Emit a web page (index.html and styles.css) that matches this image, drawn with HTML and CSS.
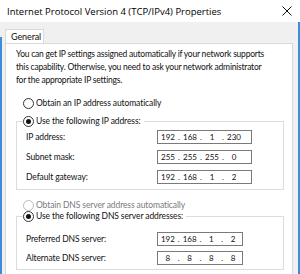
FILE: index.html
```html
<!DOCTYPE html>
<html>
<head>
<meta charset="utf-8">
<title>Internet Protocol Version 4 (TCP/IPv4) Properties</title>
<link rel="stylesheet" href="styles.css">
</head>
<body>
<div class="window">
  <div class="titlebar">
    <span class="title">Internet Protocol Version 4 (TCP/IPv4) Properties</span>
    <svg class="close" width="10" height="10" viewBox="0 0 10 10"><path d="M0.5 0.5L9.5 9.5M9.5 0.5L0.5 9.5" stroke="#111" stroke-width="1"/></svg>
  </div>
  <div class="client">
    <div class="tabs"><div class="tab">General</div></div>
    <div class="panel">
      <p class="desc">You can get IP settings assigned automatically if your network supports<br>this capability. Otherwise, you need to ask your network administrator<br>for the appropriate IP settings.</p>
      <div class="radio-row first"><span class="radio"></span>Obtain an IP address automatically</div>
      <fieldset class="group ipgroup">
        <legend class="radio-row"><span class="radio checked"></span>Use the following IP address:</legend>
        <div class="field-row"><span class="label">IP address:</span><span class="ip wide"><span class="seg">192</span><span class="dot">.</span><span class="seg">168</span><span class="dot">.</span><span class="seg">1</span><span class="dot">.</span><span class="seg">230</span></span></div>
        <div class="field-row"><span class="label">Subnet mask:</span><span class="ip wide"><span class="seg">255</span><span class="dot">.</span><span class="seg">255</span><span class="dot">.</span><span class="seg">255</span><span class="dot">.</span><span class="seg">0</span></span></div>
        <div class="field-row"><span class="label">Default gateway:</span><span class="ip wide"><span class="seg">192</span><span class="dot">.</span><span class="seg">168</span><span class="dot">.</span><span class="seg">1</span><span class="dot">.</span><span class="seg">2</span></span></div>
      </fieldset>
      <div class="radio-row disabled dns-auto"><span class="radio"></span>Obtain DNS server address automatically</div>
      <fieldset class="group dnsgroup">
        <legend class="radio-row"><span class="radio checked"></span>Use the following DNS server addresses:</legend>
        <div class="field-row"><span class="label">Preferred DNS server:</span><span class="ip narrow"><span class="seg">192</span><span class="dot">.</span><span class="seg">168</span><span class="dot">.</span><span class="seg">1</span><span class="dot">.</span><span class="seg">2</span></span></div>
        <div class="field-row"><span class="label">Alternate DNS server:</span><span class="ip narrow"><span class="seg">8</span><span class="dot">.</span><span class="seg">8</span><span class="dot">.</span><span class="seg">8</span><span class="dot">.</span><span class="seg">8</span></span></div>
      </fieldset>
    </div>
  </div>
</div>
</body>
</html>
```

FILE: styles.css
```css
html, body {
  margin: 0;
  padding: 0;
}
body {
  width: 300px;
  height: 274px;
  overflow: hidden;
  background: #f0f0f0;
  font-family: Lato, "Open Sans", sans-serif;
  font-size: 8.5px;
  letter-spacing: -0.1px;
  color: #111;
  position: relative;
}
body::before {
  content: "";
  position: absolute;
  left: 0;
  top: 37px;
  bottom: 0;
  width: 2px;
  background: #3d8ddb;
}
body::after {
  content: "";
  position: absolute;
  right: 0;
  top: 22px;
  bottom: 0;
  width: 2px;
  background: #3d8ddb;
}
.titlebar {
  height: 22px;
  background: #fff;
  display: flex;
  align-items: center;
  padding: 0 8px 0 7px;
}
.title {
  font-family: "Open Sans", sans-serif;
  font-size: 9.5px;
  letter-spacing: 0;
  color: #000;
}
.close {
  margin-left: auto;
}
.client {
  padding: 7px 0 0 5px;
}
.tabs {
  display: flex;
  height: 14px;
}
.tab {
  width: 39px;
  box-sizing: border-box;
  border: 1px solid #d9d9d9;
  border-bottom: none;
  background: #fff;
  padding-left: 5px;
  line-height: 13px;
  font-size: 9px;
}
.panel {
  width: 288px;
  height: 240px;
  box-sizing: border-box;
  border: 1px solid #d9d9d9;
  background: #fff;
  padding: 4px 0 0 10px;
}
.desc {
  margin: 0;
  line-height: 13px;
  white-space: nowrap;
  letter-spacing: -0.22px;
}
.radio-row {
  display: flex;
  align-items: center;
  height: 14px;
  white-space: nowrap;
}
.radio-row.first {
  margin-top: 9px;
  padding-left: 7px;
}
.radio {
  width: 11px;
  height: 11px;
  box-sizing: border-box;
  border: 1px solid #333;
  border-radius: 50%;
  background: #fff;
  margin-right: 2px;
  display: flex;
  align-items: center;
  justify-content: center;
}
.radio.checked::after {
  content: "";
  width: 5px;
  height: 5px;
  border-radius: 50%;
  background: #111;
}
.disabled {
  color: #7a7a7a;
}
.disabled .radio {
  border-color: #bcbcbc;
}
.group {
  width: 268px;
  box-sizing: border-box;
  margin: 0;
  border: 1px solid #dcdcdc;
  padding: 2px 0 5px 9px;
  min-width: 0;
}
.group legend {
  padding: 0 3px 0 0;
  margin-left: -3px;
}
.ipgroup {
  margin-top: 4px;
}
.ipgroup legend {
  height: 14px;
}
.dnsgroup {
  margin-top: -1px;
  padding-top: 10px;
  padding-bottom: 4px;
}
.dnsgroup legend {
  height: 12px;
}
.dns-auto {
  height: 12px;
  margin-top: 9px;
  padding-left: 7px;
}
.field-row {
  display: flex;
  align-items: center;
  height: 14px;
}
.field-row + .field-row {
  margin-top: 6px;
}
.dnsgroup .field-row + .field-row {
  margin-top: 5px;
}
.label {
  width: 131px;
  flex: none;
}
.ip {
  height: 14px;
  box-sizing: border-box;
  border: 1px solid #7a7a7a;
  display: flex;
  align-items: center;
  padding-left: 1px;
  font-size: 8px;
  letter-spacing: 0;
}
.ip.wide {
  width: 95px;
}
.ip.narrow {
  width: 86px;
}
.seg {
  width: 18px;
  text-align: center;
}
.dot {
  width: 4px;
  text-align: center;
}
```
